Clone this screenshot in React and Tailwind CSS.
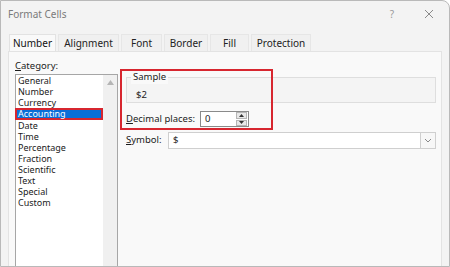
const categories = [
  "General",
  "Number",
  "Currency",
  "Accounting",
  "Date",
  "Time",
  "Percentage",
  "Fraction",
  "Scientific",
  "Text",
  "Special",
  "Custom",
];

const tabs = [
  { name: "Number", w: "w-[47px]" },
  { name: "Alignment", w: "w-[61px]" },
  { name: "Font", w: "w-[41px]" },
  { name: "Border", w: "w-[44px]" },
  { name: "Fill", w: "w-[39px]" },
  { name: "Protection", w: "w-[60px]" },
];

export default function App() {
  return (
    <div className="w-[450px] h-[267px] overflow-hidden bg-[#f3f3f3] border border-[#b9b9b9] rounded-tr-[8px] font-['Noto_Sans',sans-serif] text-[9.5px] text-[#1b1b1b] relative">
      {/* title bar */}
      <div className="h-[26px] flex items-center pl-[7px] pr-[12px]">
        <span className="text-[10px] text-[#7a7a7a] flex-1">Format Cells</span>
        <span className="text-[10px] text-[#9a9a9a] mr-[30px]">?</span>
        <svg width="10" height="10" viewBox="0 0 10 10" className="mr-[3px]">
          <path d="M1 1L9 9M9 1L1 9" stroke="#8a8a8a" strokeWidth="1" />
        </svg>
      </div>

      {/* tabs */}
      <div className="flex gap-[2px] pl-[8px] mt-[7px] h-[17px]">
        {tabs.map((t, i) => (
          <div
            key={t.name}
            className={
              i === 0
                ? `${t.w} flex items-center justify-center bg-[#f9f9f9] border border-b-0 border-[#e2e2e2] text-[#111] text-[10px]`
                : `${t.w} flex items-center justify-center bg-[#f0f0f0] border border-b-0 border-[#e6e6e6] text-[#222] text-[10px]`
            }
          >
            {t.name}
          </div>
        ))}
      </div>

      {/* panel */}
      <div className="ml-[7px] w-[434px] h-[220px] bg-[#f9f9f9] border border-[#e3e3e3] flex pl-[6px] pt-[7px]">
        {/* category column */}
        <div className="w-[103px] flex flex-col">
          <div className="h-[15px] leading-[14px]">
            <span className="underline">C</span>ategory:
          </div>
          <div className="flex-1 flex bg-white border border-[#a6a6a6] border-b-0">
            <div className="flex-1 text-[9px]">
              {categories.map((c) =>
                c === "Accounting" ? (
                  <div
                    key={c}
                    className="h-[12px] -ml-[1px] pl-[1px] leading-[8px] bg-[#0a6fd8] text-white border-2 border-[#d7262f]"
                  >
                    {c}
                  </div>
                ) : (
                  <div key={c} className="h-[11px] leading-[11px] pl-[2px]">
                    {c}
                  </div>
                )
              )}
            </div>
            <div className="w-[14px] bg-[#f0f0f0] flex justify-center pt-[5px]">
              <svg width="7" height="5" viewBox="0 0 7 5">
                <path d="M0 5L3.5 0L7 5Z" fill="#b5b5b5" />
              </svg>
            </div>
          </div>
        </div>

        {/* right column */}
        <div className="flex-1 pl-[8px] pr-[5px] flex flex-col pt-[18px]">
          <div className="relative h-[26px] bg-[#f4f4f4] border border-[#dedede]">
            <span className="absolute -top-[8px] left-[4px] px-[2px] bg-[#f9f9f9] leading-[14px]">
              Sample
            </span>
            <div className="pl-[9px] pt-[11px] leading-[12px]">$2</div>
          </div>

          <div className="flex items-center h-[22px] mt-[5px]">
            <span className="w-[74px]">
              <span className="underline">D</span>ecimal places:
            </span>
            <div className="w-[49px] h-[16px] bg-white border border-[#8a8a8a] flex items-center">
              <span className="flex-1 pl-[4px]">0</span>
              <div className="w-[12px] h-[14px] flex flex-col gap-[1px] pr-[1px]">
                <div className="flex-1 bg-[#e8e8e8] border border-[#b5b5b5] flex items-center justify-center">
                  <svg width="5" height="3" viewBox="0 0 5 3">
                    <path d="M0 3L2.5 0L5 3Z" fill="#333" />
                  </svg>
                </div>
                <div className="flex-1 bg-[#e8e8e8] border border-[#b5b5b5] flex items-center justify-center">
                  <svg width="5" height="3" viewBox="0 0 5 3">
                    <path d="M0 0L2.5 3L5 0Z" fill="#333" />
                  </svg>
                </div>
              </div>
            </div>
          </div>

          <div className="flex items-center h-[18px] mt-[1px]">
            <span className="w-[42px]">
              <span className="underline">S</span>ymbol:
            </span>
            <div className="flex-1 h-[17px] bg-white border border-[#cfcfcf] flex items-center">
              <span className="flex-1 pl-[4px]">$</span>
              <div className="w-[15px] h-[15px] border-l border-[#cfcfcf] bg-[#f7f7f7] flex items-center justify-center">
                <svg width="8" height="5" viewBox="0 0 8 5">
                  <path d="M1 1L4 4L7 1" stroke="#888" strokeWidth="1" fill="none" />
                </svg>
              </div>
            </div>
          </div>
        </div>
      </div>

      {/* annotation overlay */}
      <div className="absolute left-[119px] top-[68px] w-[153px] h-[61px] border-2 border-[#d7262f] pointer-events-none" />
    </div>
  );
}
